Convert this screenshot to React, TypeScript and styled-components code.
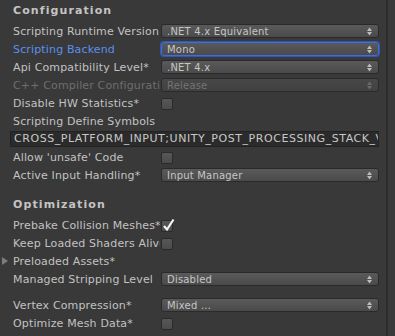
import React from "react";
import styled, { createGlobalStyle } from "styled-components";

const GlobalStyle = createGlobalStyle`
  html, body {
    margin: 0;
    padding: 0;
    background: #393939;
  }
  body {
    font-family: "DejaVu Sans", "Liberation Sans", sans-serif;
    font-size: 11px;
    color: #c2c2c2;
  }
`;

const Window = styled.div`
  display: flex;
  width: 395px;
  height: 336px;
  overflow: hidden;
  background: #393939;
`;

const Inspector = styled.div`
  flex: 1;
  min-width: 0;
  display: flex;
  flex-direction: column;
  padding-top: 2px;
`;

const ScrollEdge = styled.div`
  width: 7px;
  flex-shrink: 0;
  border-left: 2px solid #2c2c2c;
  background: #3a3a3a;
`;

const Heading = styled.div`
  height: 18px;
  line-height: 18px;
  padding-left: 13px;
  font-weight: bold;
  letter-spacing: 1.1px;
  color: #c4c4c4;
  margin-bottom: 2px;
`;

const Row = styled.div`
  display: flex;
  align-items: center;
  height: 18px;
  position: relative;
`;

const Label = styled.div<{ $tone?: "normal" | "focus" | "disabled" }>`
  width: 147px;
  padding-left: 13px;
  flex-shrink: 0;
  white-space: nowrap;
  overflow: hidden;
  letter-spacing: 0.15px;
  color: ${(p) =>
    p.$tone === "focus" ? "#5b8ff2" : p.$tone === "disabled" ? "#6e6e6e" : "#c2c2c2"};
`;

const WideLabel = styled(Label)`
  width: auto;
`;

const Foldout = styled.span`
  position: absolute;
  left: 2px;
  top: 5px;
  width: 0;
  height: 0;
  border-top: 4px solid transparent;
  border-bottom: 4px solid transparent;
  border-left: 6px solid #7c7c7c;
`;

const Popup = styled.div<{ $focused?: boolean; $disabled?: boolean }>`
  flex: 1;
  height: 14px;
  margin-left: 1px;
  margin-right: 7px;
  display: flex;
  align-items: center;
  justify-content: space-between;
  padding: 0 6px 0 5px;
  border-radius: 3px;
  box-sizing: border-box;
  border: 1px solid ${(p) => (p.$focused ? "#3d6ee0" : "#2a2a2a")};
  background: ${(p) =>
    p.$disabled
      ? "linear-gradient(#484848, #414141)"
      : "linear-gradient(#5a5a5a, #4a4a4a)"};
  color: ${(p) => (p.$disabled ? "#747474" : "#c6c6c6")};
  font-size: 10px;
  letter-spacing: 0.2px;
  box-shadow: ${(p) => (p.$focused ? "0 0 0 1px #2e57b8" : "none")};
`;

const Arrows = ({ dim }: { dim?: boolean }) => (
  <svg width="5" height="9" viewBox="0 0 5 9">
    <path d="M0 4 L2.5 0.5 L5 4 Z M0 5 L2.5 8.5 L5 5 Z" fill={dim ? "#6a6a6a" : "#bdbdbd"} />
  </svg>
);

const Check = styled.div`
  width: 12px;
  height: 12px;
  margin-left: 1px;
  margin-top: 2px;
  box-sizing: border-box;
  border: 1px solid #2a2a2a;
  border-radius: 2px;
  background: linear-gradient(#575757, #4b4b4b);
  position: relative;
`;

const Tick = styled.svg`
  position: absolute;
  left: 0px;
  top: -3px;
`;

const TextField = styled.div`
  height: 16px;
  margin: 1px 7px 1px 10px;
  flex: 1;
  min-width: 0;
  box-sizing: border-box;
  border: 1px solid #222;
  background: #2b2b2b;
  color: #c8c8c8;
  line-height: 14px;
  padding-left: 3px;
  letter-spacing: 0.55px;
  white-space: nowrap;
  overflow: hidden;
`;

const Spacer = styled.div<{ $h: number }>`
  height: ${(p) => p.$h}px;
`;

type PopupRow = { label: string; value: string; tone?: "normal" | "focus" | "disabled" };

const configPopups: PopupRow[] = [
  { label: "Scripting Runtime Version", value: ".NET 4.x Equivalent" },
  { label: "Scripting Backend", value: "Mono", tone: "focus" },
  { label: "Api Compatibility Level*", value: ".NET 4.x" },
  { label: "C++ Compiler Configuration", value: "Release", tone: "disabled" },
];

const PopupField = ({ label, value, tone }: PopupRow) => (
  <Row>
    <Label $tone={tone}>{label}</Label>
    <Popup $focused={tone === "focus"} $disabled={tone === "disabled"}>
      <span>{value}</span>
      <Arrows dim={tone === "disabled"} />
    </Popup>
  </Row>
);

const Toggle = ({ label, checked }: { label: string; checked?: boolean }) => (
  <Row>
    <Label>{label}</Label>
    <Check>
      {checked && (
        <Tick width="13" height="14" viewBox="0 0 13 14">
          <path d="M2 8 L5 11.5 L11.5 1.5" stroke="#f2f2f2" strokeWidth="2.2" fill="none" />
        </Tick>
      )}
    </Check>
  </Row>
);

export default function App() {
  return (
    <>
      <GlobalStyle />
      <Window>
        <Inspector>
          <Heading>Configuration</Heading>
          {configPopups.map((p) => (
            <PopupField key={p.label} {...p} />
          ))}
          <Toggle label="Disable HW Statistics*" />
          <Row>
            <WideLabel>Scripting Define Symbols</WideLabel>
          </Row>
          <Row>
            <TextField>CROSS_PLATFORM_INPUT;UNITY_POST_PROCESSING_STACK_V2</TextField>
          </Row>
          <Toggle label="Allow 'unsafe' Code" />
          <PopupField label="Active Input Handling*" value="Input Manager" />

          <Spacer $h={12} />
          <Heading>Optimization</Heading>
          <Toggle label="Prebake Collision Meshes*" checked />
          <Toggle label="Keep Loaded Shaders Alive*" />
          <Row>
            <Foldout />
            <WideLabel>Preloaded Assets*</WideLabel>
          </Row>
          <PopupField label="Managed Stripping Level" value="Disabled" />
          <Spacer $h={8} />
          <PopupField label="Vertex Compression*" value="Mixed ..." />
          <Toggle label="Optimize Mesh Data*" />
        </Inspector>
        <ScrollEdge />
      </Window>
    </>
  );
}
